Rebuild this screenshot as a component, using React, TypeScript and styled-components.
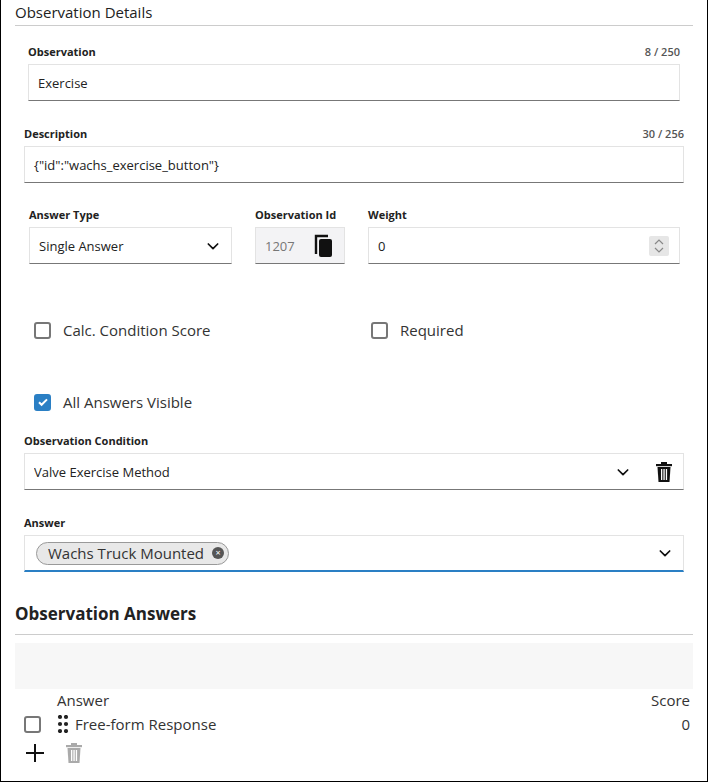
import React from 'react';
import styled, { createGlobalStyle } from 'styled-components';

const Global = createGlobalStyle`
  html, body { margin: 0; padding: 0; background: #fff; }
  body { font-family: "Open Sans", "Noto Sans", sans-serif; color: #222; }
  * { box-sizing: border-box; }
`;

const Frame = styled.div`
  width: 708px;
  height: 782px;
  border: 1px solid #000;
  border-top: none;
  padding: 0 14px 0 14px;
  overflow: hidden;
`;

const SectionTitle = styled.div<{ $bold?: boolean }>`
  font-size: ${p => (p.$bold ? '17px' : '15px')};
  font-weight: ${p => (p.$bold ? 700 : 400)};
  color: #222;
  padding: ${p => (p.$bold ? '3px 0 9px' : '2px 0 3px')};
  border-bottom: 1px solid #ccc;
`;

const Field = styled.div<{ $inset: number; $top: number }>`
  margin: ${p => p.$top}px ${p => p.$inset}px 0;
`;

const LabelRow = styled.div`
  display: flex;
  justify-content: space-between;
  font-size: 11px;
  font-weight: 700;
  color: #222;
  height: 13px;
  line-height: 13px;
  margin-bottom: 6px;
`;

const Counter = styled.span`
  color: #555;
  font-weight: 600;
`;

const Box = styled.div<{ $focused?: boolean; $disabled?: boolean }>`
  height: 37px;
  display: flex;
  align-items: center;
  padding: 0 10px 0 9px;
  border: 1px solid #e3e3e3;
  border-bottom: ${p => (p.$focused ? '2px solid #2a7fc4' : '1px solid #777')};
  background: ${p => (p.$disabled ? '#f3f3f5' : '#fff')};
  font-size: 13px;
  color: ${p => (p.$disabled ? '#777' : '#222')};
  gap: 8px;
  overflow: hidden;
`;

const Grow = styled.div`
  flex: 1;
  display: flex;
  align-items: center;
  overflow: hidden;
  white-space: nowrap;
`;

const Row3 = styled.div`
  display: flex;
  margin: 25px 13px 0 14px;
  gap: 23px;
`;

const Col = styled.div<{ $w?: number }>`
  width: ${p => (p.$w ? `${p.$w}px` : 'auto')};
  flex: ${p => (p.$w ? 'none' : 1)};
`;

const CheckRow = styled.div<{ $top: number }>`
  display: flex;
  margin: ${p => p.$top}px 0 0 19px;
`;

const CheckItem = styled.label<{ $w?: number }>`
  display: flex;
  align-items: center;
  gap: 12px;
  width: ${p => (p.$w ? `${p.$w}px` : 'auto')};
  font-size: 15px;
  color: #333;
`;

const Check = styled.span<{ $on?: boolean }>`
  width: 17px;
  height: 17px;
  border-radius: 3px;
  border: 2px solid ${p => (p.$on ? '#2a7fc4' : '#777')};
  background: ${p => (p.$on ? '#2a7fc4' : '#fff')};
  display: flex;
  align-items: center;
  justify-content: center;
`;

const Chip = styled.span`
  display: inline-flex;
  align-items: center;
  gap: 8px;
  height: 23px;
  padding: 0 4px 0 11px;
  border: 1px solid #999;
  border-radius: 12px;
  background: #e8e8e8;
  font-size: 15px;
  color: #333;
`;

const ChipX = styled.span`
  width: 12px;
  height: 12px;
  border-radius: 50%;
  background: #555;
  color: #fff;
  font-size: 9px;
  line-height: 12px;
  text-align: center;
`;

const GreyBand = styled.div`
  height: 46px;
  background: #f7f7f7;
  margin-top: 8px;
`;

const TableRow = styled.div<{ $top: number }>`
  display: flex;
  align-items: center;
  margin-top: ${p => p.$top}px;
  padding-right: 3px;
  font-size: 15px;
  color: #333;
  height: 20px;
`;

const CellCheck = styled.div`
  width: 42px;
  padding-left: 9px;
`;

const CellGrow = styled.div`
  flex: 1;
  display: flex;
  align-items: center;
  gap: 6px;
`;

const Actions = styled.div`
  display: flex;
  align-items: center;
  gap: 20px;
  margin: 8px 0 0 10px;
`;

const Chevron = ({ size = 16 }: { size?: number }) => (
  <svg width={size} height={size} viewBox="0 0 24 24" fill="none" stroke="#111" strokeWidth={2.6} strokeLinecap="round" strokeLinejoin="round">
    <path d="M5 9l7 7 7-7" />
  </svg>
);

const Trash = ({ color = '#111' }: { color?: string }) => (
  <svg width="18" height="22" viewBox="0 0 18 22">
    <rect x="1" y="3" width="16" height="2.2" fill={color} />
    <rect x="6" y="1" width="6" height="2.5" fill={color} />
    <path d="M2.5 6h13l-1 15h-11z" fill={color} />
    <rect x="6" y="8" width="1.3" height="11" fill="#fff" />
    <rect x="8.4" y="8" width="1.3" height="11" fill="#fff" />
    <rect x="10.8" y="8" width="1.3" height="11" fill="#fff" />
  </svg>
);

const Copy = () => (
  <svg width="20" height="24" viewBox="0 0 20 24" style={{ flex: 'none' }}>
    <path d="M2 20V2h12" stroke="#111" strokeWidth="2.4" fill="none" />
    <rect x="5" y="5" width="13" height="18" rx="2" fill="#111" />
  </svg>
);

const Spinner = () => (
  <svg width="20" height="20" viewBox="0 0 20 20">
    <rect width="20" height="20" rx="2" fill="#e6e6e6" />
    <path d="M6 8l4-4 4 4M6 12l4 4 4-4" stroke="#888" strokeWidth="1.2" fill="none" />
  </svg>
);

const Drag = () => (
  <svg width="12" height="18" viewBox="0 0 12 18">
    {[2, 9, 16].map(y => [3, 9].map(x => <circle key={`${x}-${y}`} cx={x} cy={y} r="2.1" fill="#222" />))}
  </svg>
);

export default function App() {
  return (
    <>
      <Global />
      <Frame>
        <SectionTitle>Observation Details</SectionTitle>

        <Field $inset={13} $top={19}>
          <LabelRow><span>Observation</span><Counter>8 / 250</Counter></LabelRow>
          <Box>Exercise</Box>
        </Field>

        <Field $inset={9} $top={26}>
          <LabelRow><span>Description</span><Counter>30 / 256</Counter></LabelRow>
          <Box>{'{"id":"wachs_exercise_button"}'}</Box>
        </Field>

        <Row3>
          <Col $w={203}>
            <LabelRow><span>Answer Type</span></LabelRow>
            <Box><Grow>Single Answer</Grow><Chevron /></Box>
          </Col>
          <Col $w={90}>
            <LabelRow><span>Observation Id</span></LabelRow>
            <Box $disabled><Grow>1207</Grow><Copy /></Box>
          </Col>
          <Col>
            <LabelRow><span>Weight</span></LabelRow>
            <Box><Grow>0</Grow><Spinner /></Box>
          </Col>
        </Row3>

        <CheckRow $top={56}>
          <CheckItem $w={337}><Check />Calc. Condition Score</CheckItem>
          <CheckItem><Check />Required</CheckItem>
        </CheckRow>

        <CheckRow $top={52}>
          <CheckItem>
            <Check $on>
              <svg width="12" height="12" viewBox="0 0 12 12"><path d="M2 6.2l2.6 2.6L10 3.4" stroke="#fff" strokeWidth="2" fill="none" /></svg>
            </Check>
            All Answers Visible
          </CheckItem>
        </CheckRow>

        <Field $inset={9} $top={22}>
          <LabelRow><span>Observation Condition</span></LabelRow>
          <Box><Grow>Valve Exercise Method</Grow><Chevron /><span style={{ width: 8 }} /><Trash /></Box>
        </Field>

        <Field $inset={9} $top={26}>
          <LabelRow><span>Answer</span></LabelRow>
          <Box $focused style={{ paddingLeft: 11 }}>
            <Grow><Chip>Wachs Truck Mounted<ChipX>×</ChipX></Chip></Grow>
            <Chevron />
          </Box>
        </Field>

        <div style={{ marginTop: 27 }}>
          <SectionTitle $bold>Observation Answers</SectionTitle>
        </div>
        <GreyBand />

        <TableRow $top={1}>
          <CellCheck />
          <CellGrow>Answer</CellGrow>
          <span>Score</span>
        </TableRow>
        <TableRow $top={4}>
          <CellCheck><Check /></CellCheck>
          <CellGrow><Drag />Free-form Response</CellGrow>
          <span>0</span>
        </TableRow>
        <Actions>
          <svg width="20" height="20" viewBox="0 0 20 20"><path d="M10 1v18M1 10h18" stroke="#111" strokeWidth="2" /></svg>
          <Trash color="#aaa" />
        </Actions>
      </Frame>
    </>
  );
}
